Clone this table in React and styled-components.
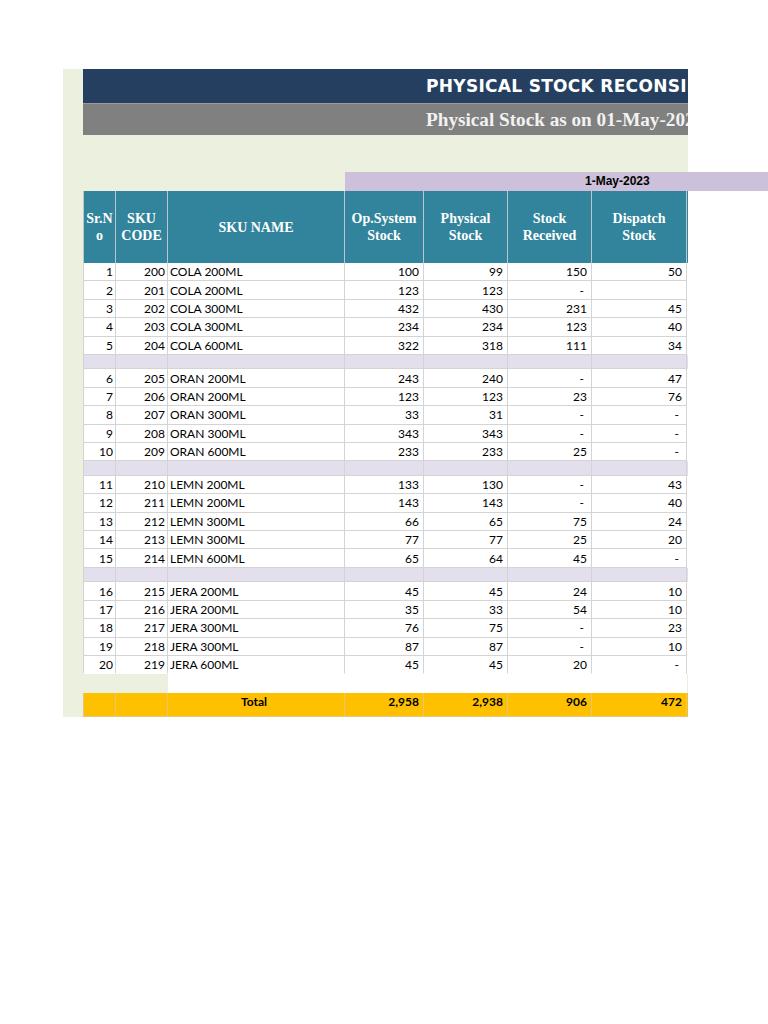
import styled, { createGlobalStyle } from "styled-components";

const GlobalStyle = createGlobalStyle`
  body {
    margin: 0;
    background: #ffffff;
  }
`;

const COLUMNS = "33px 52px 177px 79px 84px 84px 95px";
const GRID_LINE = "#d4d4d4";

const Page = styled.div`
  padding: 69px 0 0 63px;
`;

const Sheet = styled.div`
  width: 625px;
  padding-left: 20px;
  box-sizing: border-box;
  background: #ebf1de;
  display: flex;
  flex-direction: column;
`;

const TitleBar = styled.div`
  height: 34px;
  line-height: 34px;
  padding-left: 343px;
  background: #243f60;
  color: #ffffff;
  font-family: "DejaVu Sans", sans-serif;
  font-weight: bold;
  font-size: 17px;
  letter-spacing: 0.3px;
  white-space: nowrap;
  overflow: hidden;
`;

const SubTitleBar = styled.div`
  height: 32px;
  line-height: 32px;
  padding-left: 343px;
  background: #808080;
  border-top: 1px solid #9a9a9a;
  box-sizing: border-box;
  color: #f2f2f2;
  font-family: "Liberation Serif", serif;
  font-weight: bold;
  font-size: 19.2px;
  white-space: nowrap;
  overflow: hidden;
`;

const Gap = styled.div`
  height: 37px;
`;

const DateRow = styled.div`
  height: 19px;
  display: flex;
`;

const DateCell = styled.div`
  margin-left: 262px;
  flex: 0 0 423px;
  padding-left: 240px;
  box-sizing: border-box;
  background: #ccc0da;
  font-family: "Liberation Sans", Arial, sans-serif;
  font-weight: bold;
  font-size: 12px;
  line-height: 19px;
  color: #000000;
`;

const Row = styled.div`
  display: grid;
  grid-template-columns: ${COLUMNS};
  height: ${(p) => p.$height}px;
  background: ${(p) => p.$bg || "transparent"};
`;

const HeadCell = styled.div`
  display: flex;
  align-items: center;
  justify-content: center;
  text-align: center;
  white-space: pre-line;
  color: #ffffff;
  font-family: "Liberation Serif", serif;
  font-weight: bold;
  font-size: 14px;
  line-height: 17px;
  border-right: 1px solid #b9c8cd;
  &:first-child {
    border-left: 1px solid #b9c8cd;
  }
`;

const Cell = styled.div`
  display: flex;
  align-items: ${(p) => (p.$top ? "flex-start" : "center")};
  justify-content: ${(p) =>
    p.$align === "left" ? "flex-start" : p.$align === "center" ? "center" : "flex-end"};
  padding: ${(p) => (p.$top ? 1 : 0)}px ${(p) => p.$pad ?? 4}px 0
    ${(p) => (p.$align === "left" ? 2 : 0)}px;
  box-sizing: border-box;
  font-family: Lato, "Liberation Sans", sans-serif;
  font-size: 12px;
  font-weight: ${(p) => (p.$bold ? 700 : 400)};
  color: #000000;
  white-space: nowrap;
  border-right: 1px solid ${(p) => p.$line || GRID_LINE};
  border-bottom: 1px solid ${(p) => (p.$noBottom ? "transparent" : p.$line || GRID_LINE)};
  &:first-child {
    border-left: 1px solid ${(p) => p.$line || GRID_LINE};
  }
`;

const BlankCell = styled.div`
  background: ${(p) => p.$bg || "transparent"};
  grid-column: ${(p) => p.$span || "auto"};
`;

const headers = [
  "Sr.N\no",
  "SKU\nCODE",
  "SKU NAME",
  "Op.System\nStock",
  "Physical\nStock",
  "Stock\nReceived",
  "Dispatch\nStock",
];

const groups = [
  [
    [1, 200, "COLA 200ML", 100, 99, 150, 50],
    [2, 201, "COLA 200ML", 123, 123, "-", ""],
    [3, 202, "COLA 300ML", 432, 430, 231, 45],
    [4, 203, "COLA 300ML", 234, 234, 123, 40],
    [5, 204, "COLA 600ML", 322, 318, 111, 34],
  ],
  [
    [6, 205, "ORAN 200ML", 243, 240, "-", 47],
    [7, 206, "ORAN 200ML", 123, 123, 23, 76],
    [8, 207, "ORAN 300ML", 33, 31, "-", "-"],
    [9, 208, "ORAN 300ML", 343, 343, "-", "-"],
    [10, 209, "ORAN 600ML", 233, 233, 25, "-"],
  ],
  [
    [11, 210, "LEMN 200ML", 133, 130, "-", 43],
    [12, 211, "LEMN 200ML", 143, 143, "-", 40],
    [13, 212, "LEMN 300ML", 66, 65, 75, 24],
    [14, 213, "LEMN 300ML", 77, 77, 25, 20],
    [15, 214, "LEMN 600ML", 65, 64, 45, "-"],
  ],
  [
    [16, 215, "JERA 200ML", 45, 45, 24, 10],
    [17, 216, "JERA 200ML", 35, 33, 54, 10],
    [18, 217, "JERA 300ML", 76, 75, "-", 23],
    [19, 218, "JERA 300ML", 87, 87, "-", 10],
    [20, 219, "JERA 600ML", 45, 45, 20, "-"],
  ],
];

const totals = ["2,958", "2,938", "906", "472"];

function DataRow({ row, last }) {
  const [sr, code, name, ...nums] = row;
  return (
    <Row $height={18.4} $bg="#ffffff">
      <Cell $pad={2} $noBottom={last}>{sr}</Cell>
      <Cell $pad={2} $noBottom={last}>{code}</Cell>
      <Cell $align="left" $noBottom={last}>{name}</Cell>
      {nums.map((n, i) => (
        <Cell key={i} $pad={n === "-" ? 7 : 4} $noBottom={last}>
          {n}
        </Cell>
      ))}
    </Row>
  );
}

function SpacerRow() {
  return (
    <Row $height={14.5} $bg="#e4dfec">
      {headers.map((h) => (
        <Cell key={h} />
      ))}
    </Row>
  );
}

export default function App() {
  return (
    <Page>
      <GlobalStyle />
      <Sheet>
        <TitleBar>PHYSICAL STOCK RECONSILIATION</TitleBar>
        <SubTitleBar>Physical Stock as on 01-May-2023</SubTitleBar>
        <Gap />
        <DateRow>
          <DateCell>1-May-2023</DateCell>
        </DateRow>
        <Row $height={72} $bg="#31849b">
          {headers.map((h) => (
            <HeadCell key={h}>{h}</HeadCell>
          ))}
        </Row>
        {groups.map((group, gi) => (
          <div key={gi}>
            {gi > 0 && <SpacerRow />}
            {group.map((row, ri) => (
              <DataRow
                key={row[0]}
                row={row}
                last={gi === groups.length - 1 && ri === group.length - 1}
              />
            ))}
          </div>
        ))}
        <Row $height={19}>
          <BlankCell />
          <BlankCell />
          <BlankCell $bg="#ffffff" $span="span 5" />
        </Row>
        <Row $height={24} $bg="#ffc000">
          <Cell $line="#e3c877" />
          <Cell $line="#e3c877" />
          <Cell $align="center" $bold $top $line="#e3c877">
            Total
          </Cell>
          {totals.map((t) => (
            <Cell key={t} $bold $top $line="#e3c877">
              {t}
            </Cell>
          ))}
        </Row>
      </Sheet>
    </Page>
  );
}
